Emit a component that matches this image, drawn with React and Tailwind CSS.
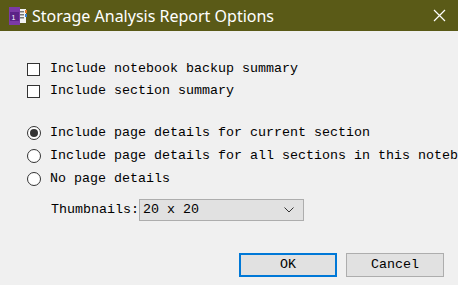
import { useState } from "react";

const mono = { fontFamily: '"Liberation Mono", "DejaVu Sans Mono", monospace' };

function Check({ label }) {
  return (
    <div className="flex items-center h-[22px]">
      <span className="w-[13px] h-[13px] border border-[#333333] bg-white shrink-0" />
      <span className="ml-[10px] text-[13.33px] text-black whitespace-nowrap">{label}</span>
    </div>
  );
}

function Radio({ label, checked, onClick }) {
  return (
    <div className="flex items-center h-[23px] cursor-default" onClick={onClick}>
      <span className="w-[14px] h-[14px] rounded-full border border-[#333333] bg-white shrink-0 flex items-center justify-center">
        {checked && <span className="w-[8px] h-[8px] rounded-full bg-[#333333]" />}
      </span>
      <span className="ml-[9px] text-[13.33px] text-black whitespace-nowrap">{label}</span>
    </div>
  );
}

export default function App() {
  const [pick, setPick] = useState(0);
  return (
    <div className="w-[458px] h-[285px] bg-[#f0f0f0] flex flex-col overflow-hidden">
      <div className="h-[31px] bg-[#5a5a17] flex items-center pl-[8px] pr-[12px] shrink-0">
        <svg width="20" height="20" viewBox="0 0 20 20">
          <rect x="8" y="3" width="10" height="14" fill="#f3f3f3" />
          <rect x="10" y="5" width="6" height="1.5" fill="#7a7a7a" />
          <rect x="10" y="8" width="6" height="1.5" fill="#7a7a7a" />
          <rect x="10" y="11" width="6" height="1.5" fill="#7a7a7a" />
          <rect x="17" y="4" width="2" height="3" fill="#e07a2a" />
          <rect x="17" y="8" width="2" height="3" fill="#3a7fd0" />
          <rect x="1" y="1" width="11" height="18" fill="#7b3aa6" />
          <rect x="2" y="6" width="9" height="9" fill="#5b2387" />
          <text x="3.5" y="13.5" fontSize="7" fill="#ffffff" fontFamily="Liberation Sans, sans-serif">1</text>
        </svg>
        <span
          className="ml-[4px] text-[16px] text-white leading-none"
          style={{ fontFamily: '"Noto Sans", "Open Sans", sans-serif' }}
        >
          Storage Analysis Report Options
        </span>
        <svg className="ml-auto" width="13" height="13" viewBox="0 0 13 13">
          <path d="M1 1 L12 12 M12 1 L1 12" stroke="#ffffff" strokeWidth="1.2" />
        </svg>
      </div>

      <div className="flex flex-col pl-[27px] pt-[27px]" style={mono}>
        <Check label="Include notebook backup summary" />
        <Check label="Include section summary" />

        <div className="mt-[19px] flex flex-col">
          <Radio label="Include page details for current section" checked={pick === 0} onClick={() => setPick(0)} />
          <Radio label="Include page details for all sections in this notebook" checked={pick === 1} onClick={() => setPick(1)} />
          <Radio label="No page details" checked={pick === 2} onClick={() => setPick(2)} />
        </div>

        <div className="mt-[9px] ml-[24px] flex items-center h-[22px]">
          <span className="text-[13.33px] text-black">Thumbnails:</span>
          <div className="w-[165px] h-[22px] border border-[#adadad] bg-[#e1e1e1] flex items-center pl-[3px] pr-[9px]">
            <span className="text-[13.33px] text-black">20 x 20</span>
            <svg className="ml-auto" width="10" height="6" viewBox="0 0 10 6">
              <path d="M0.5 0.5 L5 5 L9.5 0.5" stroke="#333333" strokeWidth="1" fill="none" />
            </svg>
          </div>
        </div>

        <div className="mt-[32px] flex justify-end gap-[9px] pr-[14px]">
          <button className="w-[98px] h-[24px] border-2 border-[#0078d7] bg-[#e1e1e1] text-[13.33px] text-black">
            OK
          </button>
          <button className="w-[98px] h-[24px] border border-[#adadad] bg-[#e1e1e1] text-[13.33px] text-black">
            Cancel
          </button>
        </div>
      </div>
    </div>
  );
}
